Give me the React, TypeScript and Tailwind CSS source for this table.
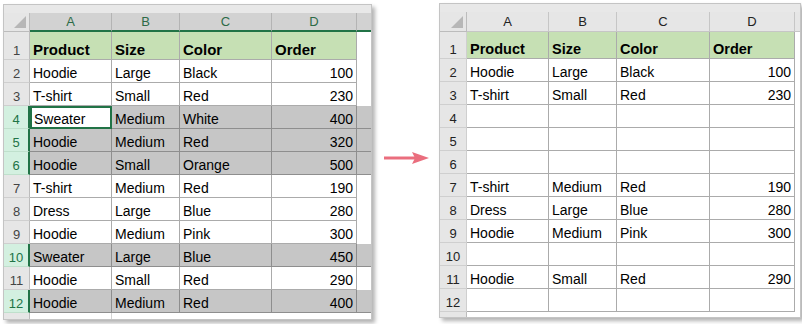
import React from 'react';

type Row = string[];

const DATA: Row[] = [
  ['Product', 'Size', 'Color', 'Order'],
  ['Hoodie', 'Large', 'Black', '100'],
  ['T-shirt', 'Small', 'Red', '230'],
  ['Sweater', 'Medium', 'White', '400'],
  ['Hoodie', 'Medium', 'Red', '320'],
  ['Hoodie', 'Small', 'Orange', '500'],
  ['T-shirt', 'Medium', 'Red', '190'],
  ['Dress', 'Large', 'Blue', '280'],
  ['Hoodie', 'Medium', 'Pink', '300'],
  ['Sweater', 'Large', 'Blue', '450'],
  ['Hoodie', 'Small', 'Red', '290'],
  ['Hoodie', 'Medium', 'Red', '400'],
];

const REMOVED = [4, 5, 6, 10, 12];
const LETTERS = ['A', 'B', 'C', 'D'];

const CornerTriangle = () => (
  <svg className="absolute right-[3px] bottom-[3px]" width="12" height="12" viewBox="0 0 12 12">
    <polygon points="12,0 12,12 0,12" fill="#b7b7b7" />
  </svg>
);

// left sheet: rows 4,5,6,10,12 selected, A4 active
const LeftSheet = () => {
  const widths = ['w-[82px]', 'w-[68px]', 'w-[92px]', 'w-[85px]'];
  return (
    <div className="mt-[4px] ml-[3px] w-[369px] h-[316px] bg-[#e8e8e8] border border-[#c4c4c4] shadow-[3px_3px_4px_rgba(0,0,0,0.3)] flex flex-col overflow-hidden">
      <div className="h-[8px] shrink-0" />
      {/* column headers */}
      <div className="flex h-[19px] shrink-0 text-[13px] text-[#2d6b47]">
        <div className="relative w-[26px] bg-[#e6e6e6] border-r border-b border-[#bcbcbc]">
          <CornerTriangle />
        </div>
        {LETTERS.map((l, i) => (
          <div
            key={l}
            className={`${widths[i]} bg-[#d2d2d2] border-r border-r-[#b4b4b4] border-b-2 border-b-[#217346] flex items-center justify-center`}
          >
            {l}
          </div>
        ))}
        <div className="flex-1 bg-[#d2d2d2] border-b-2 border-b-[#217346]" />
      </div>
      {/* rows */}
      {DATA.map((row, r) => {
        const n = r + 1;
        const sel = REMOVED.includes(n);
        const head = n === 1;
        return (
          <div key={n} className={`flex shrink-0 ${head ? 'h-[28px]' : 'h-[23px]'}`}>
            <div
              className={`w-[26px] flex items-end justify-center pb-[2px] text-[13px] border-b ${
                sel
                  ? 'bg-[#d3f0e0] text-[#217346] border-r-2 border-r-[#217346] border-b-[#bfe0cc]'
                  : 'bg-[#e6e6e6] text-[#444444] border-r border-r-[#bcbcbc] border-b-[#cfcfcf]'
              }`}
            >
              {n}
            </div>
            {row.map((v, c) => {
              const active = n === 4 && c === 0;
              let cls = 'bg-white border-r border-b border-[#ababab] px-[3px] pb-[2px]';
              if (head) cls = 'bg-[#c6e0b4] border-r border-b border-[#ababab] font-bold text-[15px] px-[3px] pb-[2px]';
              if (sel) cls = 'bg-[#c6c6c6] border-r border-b border-[#8e8e8e] px-[3px] pb-[2px]';
              if (active) cls = 'bg-white border-2 border-[#217346] px-[2px] pb-[1px]';
              return (
                <div
                  key={c}
                  className={`${widths[c]} ${cls} flex items-end ${c === 3 && !head ? 'justify-end' : ''}`}
                >
                  {v}
                </div>
              );
            })}
            <div className={`flex-1 ${sel ? 'bg-[#c6c6c6] border-b border-[#8e8e8e]' : 'bg-white'}`} />
          </div>
        );
      })}
      <div className="flex flex-1">
        <div className="w-[26px] bg-[#e6e6e6] border-r border-[#bcbcbc]" />
        <div className="w-[82px] bg-white border-r border-[#d4d4d4]" />
        <div className="flex-1 bg-white" />
      </div>
    </div>
  );
};

const RightSheet = () => {
  const widths = ['w-[82px]', 'w-[68px]', 'w-[93px]', 'w-[85px]'];
  return (
    <div className="mt-[3px] ml-[9px] w-[362px] h-[315px] bg-[#e8e8e8] border border-[#c4c4c4] shadow-[3px_3px_4px_rgba(0,0,0,0.3)] flex flex-col overflow-hidden">
      <div className="h-[8px] shrink-0" />
      <div className="flex h-[20px] shrink-0 text-[13px] text-[#222222]">
        <div className="relative w-[27px] bg-[#e6e6e6] border-r border-b border-[#bcbcbc]">
          <CornerTriangle />
        </div>
        {LETTERS.map((l, i) => (
          <div
            key={l}
            className={`${widths[i]} bg-[#e6e6e6] border-r border-b border-[#c6c6c6] flex items-center justify-center`}
          >
            {l}
          </div>
        ))}
        <div className="flex-1 bg-[#e6e6e6] border-b border-[#c6c6c6]" />
      </div>
      {DATA.map((row, r) => {
        const n = r + 1;
        const empty = REMOVED.includes(n);
        const head = n === 1;
        return (
          <div key={n} className={`flex shrink-0 ${head ? 'h-[27px]' : 'h-[23px]'}`}>
            <div className="w-[27px] flex items-end justify-center pb-[2px] text-[13px] text-[#222222] bg-[#e6e6e6] border-r border-b border-[#cfcfcf]">
              {n}
            </div>
            {row.map((v, c) => (
              <div
                key={c}
                className={`${widths[c]} ${
                  head ? 'bg-[#c6e0b4] font-bold text-[14.5px]' : 'bg-white'
                } border-r border-b border-[#ababab] flex items-end px-[3px] pb-[2px] ${c === 3 && !head ? 'justify-end' : ''}`}
              >
                {empty ? '' : v}
              </div>
            ))}
            <div className="flex-1 bg-white" />
          </div>
        );
      })}
      <div className="flex flex-1">
        <div className="w-[27px] bg-[#e6e6e6] border-r border-[#bcbcbc]" />
        <div className="flex-1 bg-white" />
      </div>
    </div>
  );
};

export default function App() {
  return (
    <div className="w-[802px] h-[324px] bg-white flex items-start text-[14px] text-black font-['Liberation_Sans',Arial,sans-serif] leading-none">
      <LeftSheet />
      <svg className="mt-[151px] ml-[12px] shrink-0" width="46" height="14" viewBox="0 0 46 14">
        <line x1="0" y1="7" x2="32" y2="7" stroke="#ea6e7e" strokeWidth="3" />
        <polygon points="28,1 45,7 28,13 31,7" fill="#ea6e7e" />
      </svg>
      <RightSheet />
    </div>
  );
}
